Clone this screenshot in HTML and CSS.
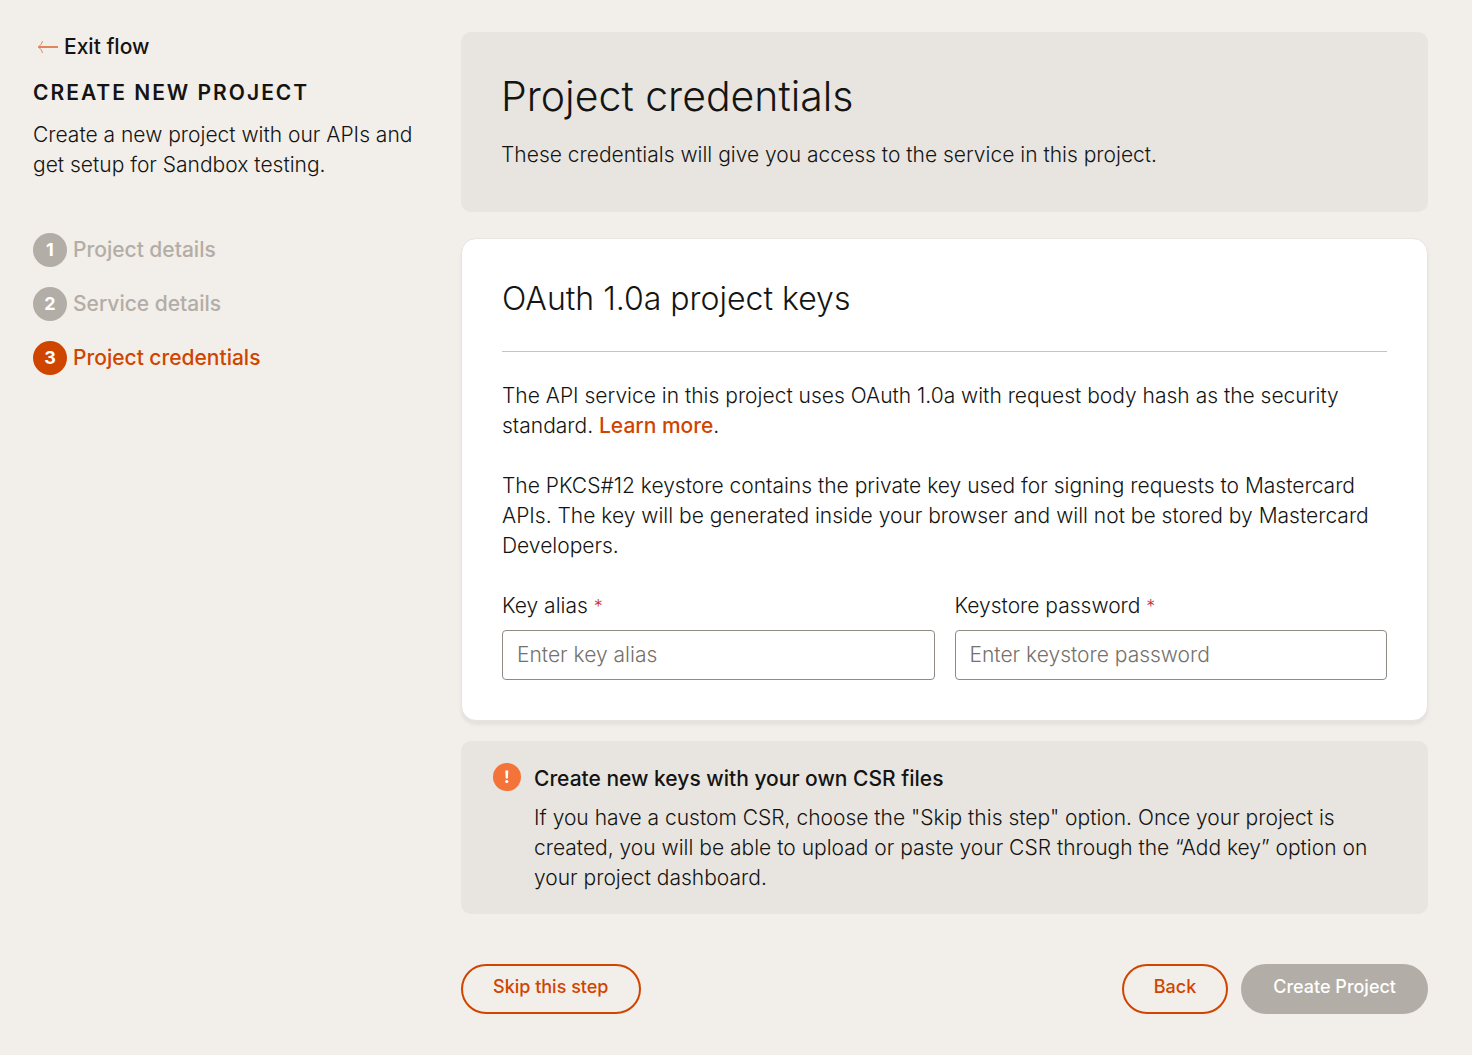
FILE: index.html
```html
<!doctype html>
<html lang="en">
<head>
	<meta charset="UTF-8">
	<meta name="viewport" content="width=device-width, initial-scale=1">
	<title>Project credentials</title>
	<link rel="stylesheet" href="styles.css">
</head>
<body>
	<div class="page">
		<aside class="sidebar">
			<a class="exit" href="#">
				<svg class="exit-arrow" viewBox="0 0 22 14" width="22" height="14" aria-hidden="true">
					<path class="shaft" d="M2 7h19"/>
					<path class="head" d="M5.500 1C5 3.500 3 6 1 7c2 1 4 3.500 4.500 6"/>
				</svg>
				Exit flow
			</a>
			<h2 class="flow-title">Create new project</h2>
			<p>Create a new project with our APIs and get setup for Sandbox testing.</p>
			<ol class="steps">
				<li class="step"><span class="step-number">1</span>Project details</li>
				<li class="step"><span class="step-number">2</span>Service details</li>
				<li class="step active" aria-current="step"><span class="step-number">3</span>Project credentials</li>
			</ol>
		</aside>
		<main>
			<header class="banner">
				<h1>Project credentials</h1>
				<p>These credentials will give you access to the service in this project.</p>
			</header>
			<form>
				<section class="card">
					<h2>OAuth 1.0a project keys</h2>
					<hr>
					<p>The API service in this project uses OAuth 1.0a with request body hash as the security standard. <a href="#">Learn more</a>.</p>
					<p>The PKCS#12 keystore contains the private key used for signing requests to Mastercard APIs. The key will be generated inside your browser and will not be stored by Mastercard Developers.</p>
					<div class="fields">
						<div class="field">
							<label for="alias">Key alias <span class="required">*</span></label>
							<input id="alias" type="text" placeholder="Enter key alias" required>
						</div>
						<div class="field">
							<label for="password">Keystore password <span class="required">*</span></label>
							<input id="password" type="password" placeholder="Enter keystore password" required>
						</div>
					</div>
				</section>
				<section class="notice">
					<svg class="notice-icon" viewBox="0 0 28 28" width="28" height="28" aria-hidden="true">
						<circle cx="14" cy="14" r="14" fill="#f37338"/>
						<path d="M12.300 7.500h3l-.4 8h-2.200z" fill="#fff"/>
						<circle cx="13.800" cy="18.500" r="1.600" fill="#fff"/>
					</svg>
					<div>
						<h3>Create new keys with your own CSR files</h3>
						<p>If you have a custom CSR, choose the "Skip this step" option. Once your project is created, you will be able to upload or paste your CSR through the “Add key” option on your project dashboard.</p>
					</div>
				</section>
				<div class="actions">
					<button class="btn skip" type="button">Skip this step</button>
					<button class="btn" type="button">Back</button>
					<button class="btn create" type="submit" disabled>Create Project</button>
				</div>
			</form>
		</main>
	</div>
</body>
</html>
```
FILE: styles.css
```css
*{
	box-sizing:border-box;
	padding:0;
	margin:0;
}
body{
	background:#f2eee9;
	color:#141413;
	font:300 21px/30px Inter,sans-serif;
}
.page{
	display:grid;
	grid-template-columns:388px minmax(0,1fr);
	gap:40px;
	padding:32px 44px 40px 33px;
}
.exit{
	display:flex;
	align-items:center;
	gap:5px;
	padding-left:4px;
	color:#141413;
	font-weight:500;
	text-decoration:none;
}
.exit-arrow{
	fill:none;
	stroke:#e0855c;
}
.shaft{
	stroke-width:2;
}
.flow-title{
	margin:16px 0 12px;
	font-weight:600;
	font-size:21px;
	letter-spacing:2px;
	text-transform:uppercase;
}
.steps{
	display:grid;
	gap:20px;
	margin-top:53px;
	list-style:none;
}
.step{
	display:flex;
	align-items:center;
	gap:6px;
	color:#b2ada6;
	font-weight:500;
}
.step-number{
	width:34px;
	height:34px;
	border-radius:50%;
	background:#b2ada6;
	color:#fff;
	font-weight:700;
	font-size:18px;
	line-height:34px;
	text-align:center;
}
.active{
	color:#cf4500;
}
.active .step-number{
	background:#cf4500;
}
.banner{
	padding:40px 40px 42px;
	border-radius:10px;
	background:#e8e5e0;
}
h1{
	margin-bottom:20px;
	font-weight:300;
	font-size:41px;
	line-height:48px;
}
.card{
	margin-top:26px;
	padding:40px;
	border:1px solid #e8e4df;
	border-radius:15px;
	background:#fff;
	box-shadow:0 4px 3px #e5e1dc;
}
.card h2{
	font-weight:300;
	font-size:32px;
	line-height:40px;
}
hr{
	margin:32px 0 29px;
	border:0;
	border-top:1px solid #c4c4c4;
}
.card p{
	margin-bottom:30px;
}
.card a{
	color:#cf4500;
	font-weight:500;
	text-decoration:none;
}
.fields{
	display:grid;
	grid-template-columns:1fr 1fr;
	gap:20px;
}
.field label{
	display:block;
	margin-bottom:9px;
}
.required{
	color:#cc3340;
	font-size:18px;
	line-height:18px;
}
.field input{
	width:100%;
	height:50px;
	padding:0 14px 2px;
	border:1px solid #8f8a84;
	border-radius:4px;
	background:#fff;
	font:inherit;
}
.field input::placeholder{
	color:#75716b;
}
.notice{
	display:flex;
	gap:13px;
	margin-top:20px;
	padding:22px 40px 21px 32px;
	border-radius:10px;
	background:#e8e5e0;
}
.notice-icon{
	flex:none;
}
.notice h3{
	margin-bottom:8px;
	font-weight:500;
	font-size:21px;
	line-height:32px;
}
.actions{
	display:flex;
	gap:13px;
	margin-top:50px;
}
.btn{
	height:50px;
	padding:0 30px 4px;
	border:2px solid #cf4500;
	border-radius:25px;
	background:transparent;
	color:#cf4500;
	font:500 18px/24px Inter,sans-serif;
}
.skip{
	margin-right:auto;
}
.create{
	border-color:#b2ada6;
	background:#b2ada6;
	color:#fff;
}
```
